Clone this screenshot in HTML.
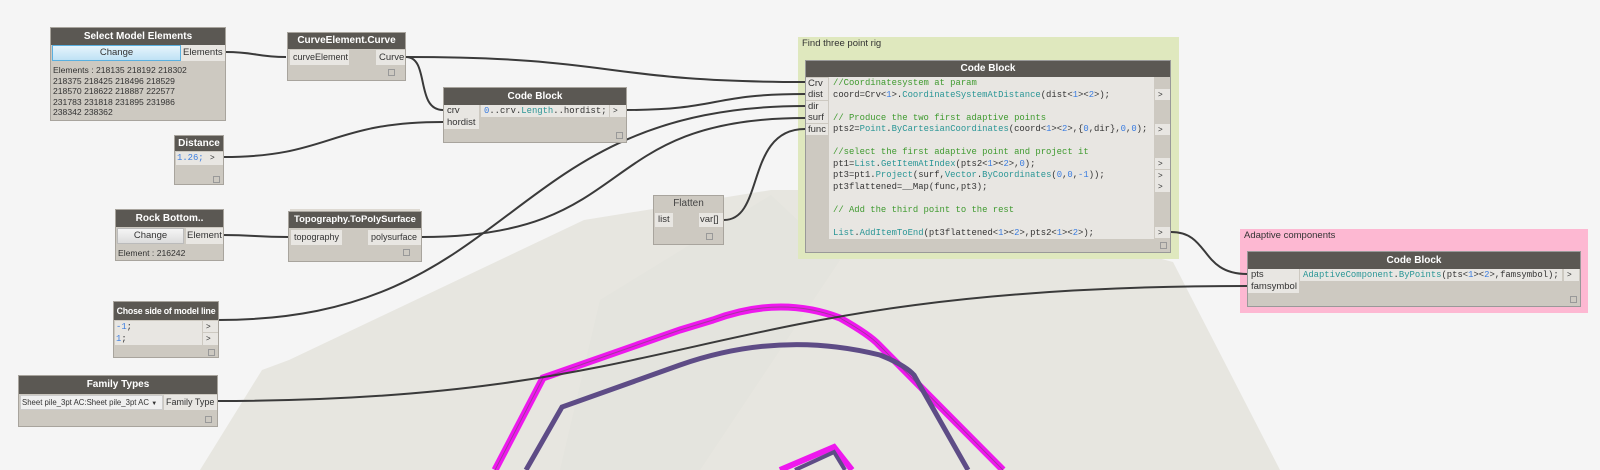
<!DOCTYPE html>
<html><head><meta charset="utf-8"><style>
body{margin:0;width:1600px;height:470px;background:#f5f5f5;overflow:hidden;position:relative;font-family:"Liberation Sans",sans-serif;}
div{white-space:nowrap;}
.a{position:absolute;box-sizing:border-box;}
.node{position:absolute;background:#cdc9c1;border:1px solid #a8a49d;box-sizing:border-box;}
.hd{position:absolute;left:0;right:0;top:0;background:#5b5853;color:#fff;font-weight:bold;font-size:10px;text-align:center;overflow:hidden;}
.pl{position:absolute;background:#e8e6e2;color:#333;font-size:9.5px;padding-left:3px;box-sizing:border-box;line-height:12px;overflow:hidden;}
.mono{font-family:"Liberation Mono",monospace;font-size:8.9px;white-space:pre;color:#333;}
.c{color:#3f9a2f}.t{color:#2a9696}.n{color:#3b7de0}
.cb{position:absolute;width:7px;height:7px;border:1px solid #999;box-sizing:border-box;}
</style></head><body>
<svg class="a" style="left:0;top:0" width="1600" height="470">
<polygon points="200,470 262,370 289,360 584,220 771,190 900,190 1173,262 1280,470" fill="#e7e6e0"/>
<polygon points="600,300 771,195 840,260 700,470 560,470" fill="#e3e2dc" opacity="0.6"/>
<path d="M495,470 L543,378 L680,330 L713,320 Q780,295 840,318 Q870,335 879,345 L1003,470" fill="none" stroke="#ee18ee" stroke-width="7"/>
<path d="M495,470 L543,378 L680,330 L713,320 Q780,295 840,318 Q870,335 879,345 L1003,470" fill="none" stroke="#a03a9a" stroke-width="1"/>
<path d="M526,470 L562,407 L680,365 Q780,330 880,355 Q905,365 914,375 L968,470" fill="none" stroke="#5e4c86" stroke-width="5"/>
<path d="M780,470 L834,447 L852,470" fill="none" stroke="#ee18ee" stroke-width="6"/>
<path d="M795,470 L834,452 L845,470" fill="none" stroke="#5e4c86" stroke-width="4"/>
</svg>
<div class="a" style="left:798px;top:37px;width:381px;height:222px;background:#dfe8be"></div>
<div class="a" style="left:802px;top:38px;font-size:9.5px;color:#333">Find three point rig</div>
<div class="a" style="left:1240px;top:229px;width:348px;height:84px;background:#fdb8d2"></div>
<div class="a" style="left:1244px;top:230px;font-size:9.5px;color:#333">Adaptive components</div>
<svg class="a" style="left:0;top:0" width="1600" height="470" fill="none" stroke="#3a3a3a" stroke-width="2">
<path d="M226,52 C256,52 256,57 286,57"/>
<path d="M406,57 C620,57 600,82 805,82"/>
<path d="M406,57 C430,57 415,110 443,110"/>
<path d="M224,157 C330,157 330,122 443,122"/>
<path d="M626,110 C720,110 710,94 805,94"/>
<path d="M223,235 C255,235 255,237 288,237"/>
<path d="M422,237 C640,237 590,118 805,118"/>
<path d="M218,320 C520,320 500,106 805,106"/>
<path d="M724,220 C765,220 745,129 805,129"/>
<path d="M1171,232 C1210,232 1200,274 1247,274"/>
<path d="M217,401 C700,401 700,286 1247,286"/>
</svg>

<div class="node" style="left:50px;top:27px;width:176px;height:94px">
<div class="hd" style="height:17px;line-height:17px">Select Model Elements</div>
<div class="a" style="left:1px;top:17px;width:129px;height:16px;background:linear-gradient(#e6f4fc,#bfe2f5);border:1px solid #5ab0e0;font-size:9.5px;text-align:center;line-height:14px;color:#333">Change</div>
<div class="pl" style="left:130px;top:17px;width:44px;height:16px;line-height:16px;padding-left:2px">Elements</div>
<div class="a" style="left:2px;top:37px;font-size:8.6px;line-height:10.5px;color:#333">Elements : 218135 218192 218302<br>218375 218425 218496 218529<br>218570 218622 218887 222577<br>231783 231818 231895 231986<br>238342 238362</div>
</div>
<div class="node" style="left:287px;top:32px;width:119px;height:49px">
<div class="hd" style="height:16px;line-height:16px">CurveElement.Curve</div>
<div class="pl" style="left:2px;top:17px;width:59px;height:15px;line-height:15px;font-size:9px">curveElement</div>
<div class="pl" style="left:88px;top:17px;width:29px;height:15px;line-height:15px">Curve</div>
<div class="cb" style="left:100px;top:36px"></div>
</div>
<div class="node" style="left:174px;top:135px;width:50px;height:50px">
<div class="hd" style="height:15px;line-height:15px">Distance</div>
<div class="pl mono n" style="left:1px;top:16px;width:31px;height:13px;padding-left:1px">1.26;</div>
<div class="pl" style="left:32px;top:16px;width:16px;height:13px;font-size:8px">&gt;</div>
<div class="cb" style="left:38px;top:40px"></div>
</div>
<div class="node" style="left:443px;top:87px;width:184px;height:56px">
<div class="hd" style="height:17px;line-height:17px">Code Block</div>
<div class="pl" style="left:0;top:17px;width:35px;height:12px">crv</div>
<div class="pl" style="left:0;top:29px;width:35px;height:12px">hordist</div>
<div class="pl mono" style="left:37px;top:17px;width:128px;height:12px"><span class="n">0</span>..crv.<span class="t">Length</span>..hordist;</div>
<div class="pl" style="left:166px;top:17px;width:16px;height:12px;font-size:8px">&gt;</div>
<div class="cb" style="left:172px;top:44px"></div>
</div>
<div class="node" style="left:653px;top:195px;width:71px;height:50px">
<div class="hd" style="height:16px;line-height:16px;background:#cdc9c1;color:#444;font-weight:normal">Flatten</div>
<div class="pl" style="left:1px;top:17px;width:18px;height:14px;line-height:14px">list</div>
<div class="pl" style="left:45px;top:17px;width:24px;height:14px;line-height:14px;padding-left:1px">var[]</div>
<div class="cb" style="left:52px;top:37px"></div>
</div>
<div class="node" style="left:115px;top:209px;width:109px;height:52px">
<div class="hd" style="height:17px;line-height:17px">Rock Bottom..</div>
<div class="a" style="left:1px;top:18px;width:67px;height:16px;background:linear-gradient(#f5f5f5,#dcdcdc);border:1px solid #bbb;font-size:9.5px;text-align:center;line-height:14px;color:#333">Change</div>
<div class="pl" style="left:70px;top:18px;width:37px;height:16px;line-height:16px;padding-left:1px">Element</div>
<div class="a" style="left:2px;top:38px;font-size:8.6px;color:#333">Element : 216242</div>
</div>
<div class="a" style="left:290px;top:209px;width:130px;height:3px;background:#ddd9d2"></div>
<div class="node" style="left:288px;top:211px;width:134px;height:51px">
<div class="hd" style="height:16px;line-height:16px;font-size:9.5px">Topography.ToPolySurface</div>
<div class="pl" style="left:2px;top:18px;width:51px;height:15px;line-height:15px;font-size:9px">topography</div>
<div class="pl" style="left:79px;top:18px;width:53px;height:15px;line-height:15px;font-size:9px">polysurface</div>
<div class="cb" style="left:114px;top:37px"></div>
</div>
<div class="node" style="left:113px;top:301px;width:106px;height:57px">
<div class="hd" style="height:18px;line-height:18px;font-size:8.8px;letter-spacing:-0.2px">Chose side of model line</div>
<div class="pl mono n" style="left:1px;top:19px;width:87px;height:12px;padding-left:1px">-1<span style="color:#333">;</span></div>
<div class="pl mono n" style="left:1px;top:31px;width:87px;height:12px;padding-left:1px">1<span style="color:#333">;</span></div>
<div class="pl" style="left:89px;top:19px;width:15px;height:11px;font-size:8px">&gt;</div>
<div class="pl" style="left:89px;top:31px;width:15px;height:12px;font-size:8px">&gt;</div>
<div class="cb" style="left:94px;top:47px"></div>
</div>
<div class="node" style="left:18px;top:375px;width:200px;height:52px">
<div class="hd" style="height:18px;line-height:18px">Family Types</div>
<div class="a" style="left:1px;top:19px;width:143px;height:15px;background:#f0f0f0;border:1px solid #ccc;font-size:7.8px;line-height:13px;padding-left:1px;color:#333;overflow:hidden">Sheet pile_3pt AC:Sheet pile_3pt AC <span style="font-size:6px">▼</span></div>
<div class="pl" style="left:145px;top:19px;width:53px;height:15px;line-height:15px;font-size:9px;padding-left:2px">Family Type</div>
<div class="cb" style="left:186px;top:40px"></div>
</div>
<div class="node" style="left:805px;top:60px;width:366px;height:193px;border-color:#999">
<div class="hd" style="height:16px;line-height:16px">Code Block</div>
<div class="pl" style="left:0;top:17px;width:22px;height:11px;line-height:11px;padding-left:2px">Crv</div>
<div class="pl" style="left:0;top:28px;width:22px;height:11px;line-height:11px;padding-left:2px">dist</div>
<div class="pl" style="left:0;top:40px;width:22px;height:11px;line-height:11px;padding-left:2px">dir</div>
<div class="pl" style="left:0;top:51px;width:22px;height:11px;line-height:11px;padding-left:2px">surf</div>
<div class="pl" style="left:0;top:63px;width:22px;height:11px;line-height:11px;padding-left:2px">func</div>
<div class="a mono" style="left:23px;top:16px;width:325px;height:162px;background:#e8e6e2;padding-left:4px;padding-top:1px;line-height:11.55px"><span class="c">//Coordinatesystem at param</span>
coord=Crv&lt;<span class="n">1</span>&gt;.<span class="t">CoordinateSystemAtDistance</span>(dist&lt;<span class="n">1</span>&gt;&lt;<span class="n">2</span>&gt;);

<span class="c">// Produce the two first adaptive points</span>
pts2=<span class="t">Point</span>.<span class="t">ByCartesianCoordinates</span>(coord&lt;<span class="n">1</span>&gt;&lt;<span class="n">2</span>&gt;,{<span class="n">0</span>,dir},<span class="n">0</span>,<span class="n">0</span>);

<span class="c">//select the first adaptive point and project it</span>
pt1=<span class="t">List</span>.<span class="t">GetItemAtIndex</span>(pts2&lt;<span class="n">1</span>&gt;&lt;<span class="n">2</span>&gt;,<span class="n">0</span>);
pt3=pt1.<span class="t">Project</span>(surf,<span class="t">Vector</span>.<span class="t">ByCoordinates</span>(<span class="n">0</span>,<span class="n">0</span>,<span class="n">-1</span>));
pt3flattened=__Map(func,pt3);

<span class="c">// Add the third point to the rest</span>

<span class="t">List</span>.<span class="t">AddItemToEnd</span>(pt3flattened&lt;<span class="n">1</span>&gt;&lt;<span class="n">2</span>&gt;,pts2&lt;<span class="n">1</span>&gt;&lt;<span class="n">2</span>&gt;);</div>
<div class="pl" style="left:349px;top:28px;width:15px;height:11px;line-height:11px;font-size:8px">&gt;</div>
<div class="pl" style="left:349px;top:63px;width:15px;height:11px;line-height:11px;font-size:8px">&gt;</div>
<div class="pl" style="left:349px;top:97px;width:15px;height:11px;line-height:11px;font-size:8px">&gt;</div>
<div class="pl" style="left:349px;top:109px;width:15px;height:11px;line-height:11px;font-size:8px">&gt;</div>
<div class="pl" style="left:349px;top:120px;width:15px;height:11px;line-height:11px;font-size:8px">&gt;</div>
<div class="pl" style="left:349px;top:166px;width:15px;height:11px;line-height:11px;font-size:8px">&gt;</div>
<div class="cb" style="left:354px;top:181px"></div>
</div>
<div class="node" style="left:1247px;top:251px;width:334px;height:56px;border-color:#999">
<div class="hd" style="height:17px;line-height:17px">Code Block</div>
<div class="pl" style="left:0;top:17px;width:51px;height:12px">pts</div>
<div class="pl" style="left:0;top:29px;width:51px;height:12px">famsymbol</div>
<div class="pl mono" style="left:52px;top:17px;width:262px;height:12px"><span class="t">AdaptiveComponent</span>.<span class="t">ByPoints</span>(pts&lt;<span class="n">1</span>&gt;&lt;<span class="n">2</span>&gt;,famsymbol);</div>
<div class="pl" style="left:316px;top:17px;width:15px;height:12px;font-size:8px">&gt;</div>
<div class="cb" style="left:322px;top:44px"></div>
</div>
</body></html>
